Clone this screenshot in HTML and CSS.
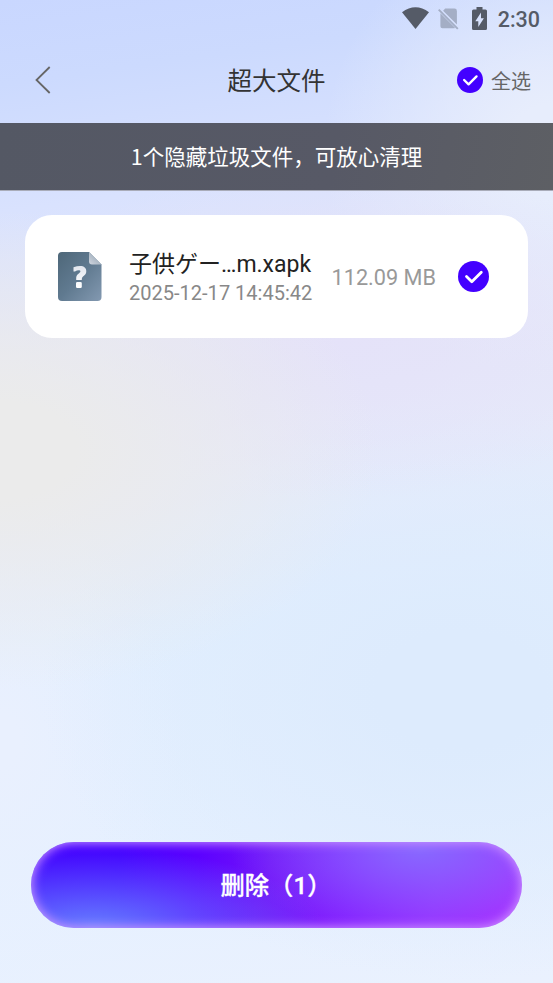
FILE: index.html
```
<!DOCTYPE html>
<html lang="zh-CN">
<head>
<meta charset="utf-8">
<title>超大文件</title>
<link rel="stylesheet" href="styles.css">
</head>
<body>
<div class="screen">
  <div class="status">
    <svg class="wifi" width="27" height="22" viewBox="0 0 27 22"><path d="M0 5.2Q13.500-4.500 27 5.200L13.500 22Z"/></svg>
    <svg class="sim" width="21" height="22" viewBox="0 0 21 22"><path d="M7.200 .5H16.500q2.400 0 2.400 2.400V16.600L5.100 2.800Z M2.400 5.200 17 19.800 16.400 20.200H4.500q-2.100 0-2.100-2Z"/><path class="slash" d="M.7 1.700 19.800 20.800"/></svg>
    <svg class="battery" width="15" height="23" viewBox="0 0 15 23"><path fill-rule="evenodd" d="M4.500 0h6v2.500H13.500q1.500 0 1.500 1.500V21.500Q15 23 13.500 23h-12Q0 23 0 21.500V4Q0 2.500 1.500 2.500h3ZM9 5.500 3.300 14.300H6.300V20L11.900 11.200H9Z"/></svg>
    <span class="time">2:30</span>
  </div>
  <header class="header">
    <svg class="back" width="18" height="30" viewBox="0 0 18 30"><path d="M15.700 2 2.500 15 15.700 28"/></svg>
    <h1 class="title">超大文件</h1>
    <div class="select-all">
      <svg class="check" width="26" height="26" viewBox="0 0 31 31"><circle cx="15.500" cy="15.500" r="15.500"/><path d="M8.500 15.500 13.800 20.700 23.300 11.200"/></svg>
      <span>全选</span>
    </div>
  </header>
  <div class="banner">1个隐藏垃圾文件，可放心清理</div>
  <main class="list">
    <div class="card">
      <svg class="file-icon" width="44" height="50" viewBox="0 0 44 50">
        <defs>
          <linearGradient id="sheet" x1="0" y1="0" x2="1" y2="1"><stop offset="0" stop-color="#4e6779"/><stop offset=".5" stop-color="#607a90"/><stop offset="1" stop-color="#8399b1"/></linearGradient>
          <linearGradient id="fold" x1="0" y1="1" x2="1" y2="0"><stop offset="0" stop-color="#d0d6df"/><stop offset="1" stop-color="#8799aa"/></linearGradient>
          <linearGradient id="mark" x1="0" y1="0" x2="0" y2="1"><stop offset="0" stop-color="#e2e6ee"/><stop offset="1" stop-color="#fff"/></linearGradient>
        </defs>
        <path fill="url(#sheet)" d="M4 0H31L43.500 12.500V45q0 4-4 4H4q-4 0-4-4V4Q0 0 4 0Z"/>
        <path fill="url(#fold)" d="M31 0 43.500 12.500H34q-3 0-3-3Z"/>
        <path fill="url(#mark)" d="M15.500 15.200Q19 14 22 14C26.200 14 28.300 16 28.300 19.200C28.300 21.700 27 23 25.300 24.200C24.100 25.200 23.800 26 23.800 28H18.200V25.800C18.200 23.700 19.400 22.600 20.800 21.500C22 20.500 22.400 20 22.400 19.300C22.400 18.500 21.700 18.300 20.700 18.300Q18.900 18.300 17 19.400H15.500ZM19.300 30H22.500Q23.800 30 23.800 31.300V34.700Q23.800 36 22.500 36H19.300Q18 36 18 34.700V31.300Q18 30 19.300 30Z"/>
      </svg>
      <div class="info">
        <div class="name">子供ゲー…m.xapk</div>
        <div class="date">2025-12-17 14:45:42</div>
      </div>
      <div class="size">112.09 MB</div>
      <svg class="check" width="31" height="31" viewBox="0 0 31 31"><circle cx="15.500" cy="15.500" r="15.500"/><path d="M8.500 15.500 13.800 20.700 23.300 11.200"/></svg>
    </div>
  </main>
  <button class="delete">删除（1）</button>
</div>
</body>
</html>
```
FILE: styles.css
```
* { box-sizing: border-box; }
body { margin: 0; font-family: Roboto, "Noto Sans CJK SC", sans-serif; }
.screen {
  width: 553px;
  height: 983px;
  display: flex;
  flex-direction: column;
  overflow: hidden;
  background:
    radial-gradient(ellipse 380px 240px at 0 450px, #ebebeb 20%, #ebebeb00 100%),
    radial-gradient(ellipse 330px 170px at 340px 330px, #e5e2f9 0%, #e5e2f900 100%),
    radial-gradient(ellipse 230px 230px at 553px 150px, #e7edfc 20%, #e7edfc00 100%),
    radial-gradient(ellipse 420px 290px at 460px 690px, #ddebfd 20%, #ddebfd00 100%),
    radial-gradient(ellipse 180px 260px at 0 740px, #e9f0fe 10%, #e9f0fe00 100%),
    linear-gradient(172deg, #c9d7ff 0%, #ccdafe 8%, #d9e2fe 20%, #e4e6f8 34%, #e6eafa 48%, #e2effe 62%, #e5f0ff 82%, #eaf1fe 100%);
}
.status {
  height: 38px;
  display: flex;
  align-items: center;
  justify-content: flex-end;
  padding-right: 13px;
  fill: #555b67;
  color: #555b67;
}
.wifi { margin-bottom: 2px; }
.sim { margin-left: 9px; fill: #a4aec5; }
.slash { stroke: #a4aec5; stroke-width: 1.9; }
.battery { margin: 0 0 1px 13px; }
.time { margin-left: 11px; padding-top: 1px; font-size: 21.5px; font-weight: 500; line-height: 38px; }
.header {
  height: 85px;
  display: grid;
  grid-template-columns: 1fr auto 1fr;
  align-items: center;
  padding: 0 22px 2px 34px;
}
.back { fill: none; stroke: #666; stroke-width: 1.8; }
.title { margin: 0 0 0 -12px; font-size: 24.5px; font-weight: 400; color: #333; }
.select-all {
  display: flex;
  align-items: center;
  justify-content: flex-end;
  gap: 8px;
  font-size: 20px;
  color: #666;
}
.select-all span { padding-top: 1px; }
.check { fill: #4300ff; flex: none; }
.check path { fill: none; stroke: #fff; stroke-width: 2.8; stroke-linecap: round; stroke-linejoin: round; }
.banner {
  height: 67px;
  line-height: 66px;
  text-align: center;
  background: linear-gradient(100deg, #545864, #575966 60%, #5d5f64);
  box-shadow: 0 1px #a9acb9;
  color: #fff;
  font-family: "Noto Sans CJK SC", sans-serif;
  font-size: 21.5px;
}
.list { flex: 1; padding: 25px 25px 0 24.500px; }
.card {
  height: 123px;
  border-radius: 27px;
  background: #fff;
  display: flex;
  align-items: center;
  padding: 0 39.500px 0 33.500px;
}
.info { width: 184px; margin-left: 27px; padding-top: 3px; white-space: nowrap; }
.name { font-family: Roboto, "Noto Sans CJK JP", sans-serif; font-size: 23px; line-height: 31px; color: #222; }
.date { font-size: 20.05px; line-height: 27px; color: #888; }
.size { margin-left: auto; margin-right: 21.500px; padding-top: 2px; font-size: 21.7px; color: #999; }
.delete {
  width: 491px;
  height: 86px;
  flex: none;
  margin: 0 auto 55px 31px;
  padding: 2px 1px 0 0;
  border: 0;
  border-radius: 43px;
  color: #fff;
  font: 500 24.3px/84px Roboto, "Noto Sans CJK SC", sans-serif;
  -webkit-text-stroke: .3px #fff;
  box-shadow: inset 0 0 11px 1px #cf98ff;
  background:
    radial-gradient(ellipse 230px 80px at 62px 86px, #667fff 0%, #667fff00 100%),
    radial-gradient(ellipse 190px 85px at 390px 8px, #8868ff 0%, #8868ff00 100%),
    linear-gradient(98deg, #4000ff 0%, #4300ff 18%, #5c02ff 34%, #7214f8 48%, #8520ff 65%, #9830ff 82%, #a82dff 100%);
}
```
